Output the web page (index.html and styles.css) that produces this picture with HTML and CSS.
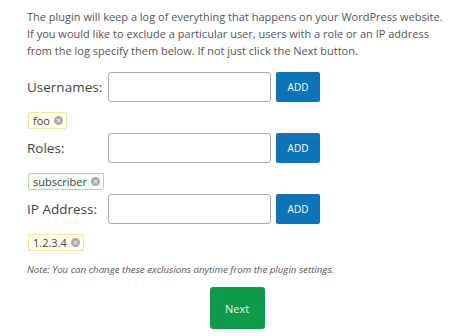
FILE: index.html
```html
<!DOCTYPE html>
<html lang="en">
<head>
    <meta charset="UTF-8">
    <meta name="viewport" content="width=device-width, initial-scale=1.0">
    <title>Exclusions</title>
    <link rel="stylesheet" href="styles.css">
</head>
<body>
    <div class="wizard">
        <p class="intro">The plugin will keep a log of everything that happens on your WordPress website. If you would like to exclude a particular user, users with a role or an IP address from the log specify them below. If not just click the Next button.</p>

        <div class="field first">
            <label for="users">Usernames:</label>
            <input type="text" id="users">
            <button class="add-button">ADD</button>
        </div>
        <div class="tags">
            <span class="tag yellow">foo <span class="remove"></span></span>
        </div>

        <div class="field">
            <label for="roles">Roles:</label>
            <input type="text" id="roles">
            <button class="add-button">ADD</button>
        </div>
        <div class="tags">
            <span class="tag green">subscriber <span class="remove"></span></span>
        </div>

        <div class="field">
            <label for="ips">IP Address:</label>
            <input type="text" id="ips">
            <button class="add-button">ADD</button>
        </div>
        <div class="tags">
            <span class="tag yellow">1.2.3.4 <span class="remove"></span></span>
        </div>

        <p class="note">Note: You can change these exclusions anytime from the plugin settings.</p>

        <div class="actions">
            <button class="next-button">Next</button>
        </div>
    </div>
</body>
</html>
```

FILE: styles.css
```css
body {
    margin: 0;
    font-family: "Open Sans", "DejaVu Sans", sans-serif;
    background-color: #fff;
    color: #555;
}
.wizard {
    padding: 8px 27px 0 27px;
}
.intro {
    margin: 0;
    font-size: 11px;
    line-height: 17px;
}
.field {
    display: flex;
    align-items: center;
    margin-top: 4px;
}
.field.first {
    margin-top: 13px;
}
.field label {
    flex-shrink: 0;
    width: 81px;
    font-size: 13.5px;
    color: #444;
}
.field input {
    box-sizing: border-box;
    width: 163px;
    height: 30px;
    border: 1px solid #aaa;
    border-radius: 3px;
    margin: 0;
    padding: 0 6px;
}
.add-button {
    width: 44px;
    height: 30px;
    margin-left: 5px;
    border: none;
    border-radius: 2px;
    background-color: #0c74b9;
    color: #fff;
    font-family: inherit;
    font-size: 10px;
}
.tags {
    display: flex;
    margin-top: 10px;
    padding-left: 1px;
}
.tag {
    display: inline-flex;
    align-items: center;
    box-sizing: border-box;
    height: 17px;
    padding: 0 3px 0 4px;
    border: 1px solid;
    border-radius: 2px;
    font-size: 11px;
    color: #444;
}
.tag.yellow {
    border-color: #efe79a;
    background-color: #fffef2;
}
.tag.green {
    border-color: #a9dca9;
    background-color: #f5fcf3;
}
.remove {
    display: inline-block;
    width: 9px;
    height: 9px;
    margin-left: 4px;
    border-radius: 50%;
    background-color: #aaa;
    position: relative;
}
.remove::before,
.remove::after {
    content: "";
    position: absolute;
    left: 2px;
    top: 4px;
    width: 5px;
    height: 1px;
    background-color: #eee;
    transform: rotate(45deg);
}
.remove::after {
    transform: rotate(-45deg);
}
.note {
    margin: 12px 0 0 0;
    font-size: 9.7px;
    font-style: italic;
    color: #555;
}
.actions {
    text-align: center;
    margin: 11px -27px 0 -27px;
}
.next-button {
    width: 55px;
    height: 42px;
    border: none;
    border-radius: 3px;
    background-color: #0e9a4a;
    color: #e8f5ec;
    font-family: inherit;
    font-size: 11px;
}
```
